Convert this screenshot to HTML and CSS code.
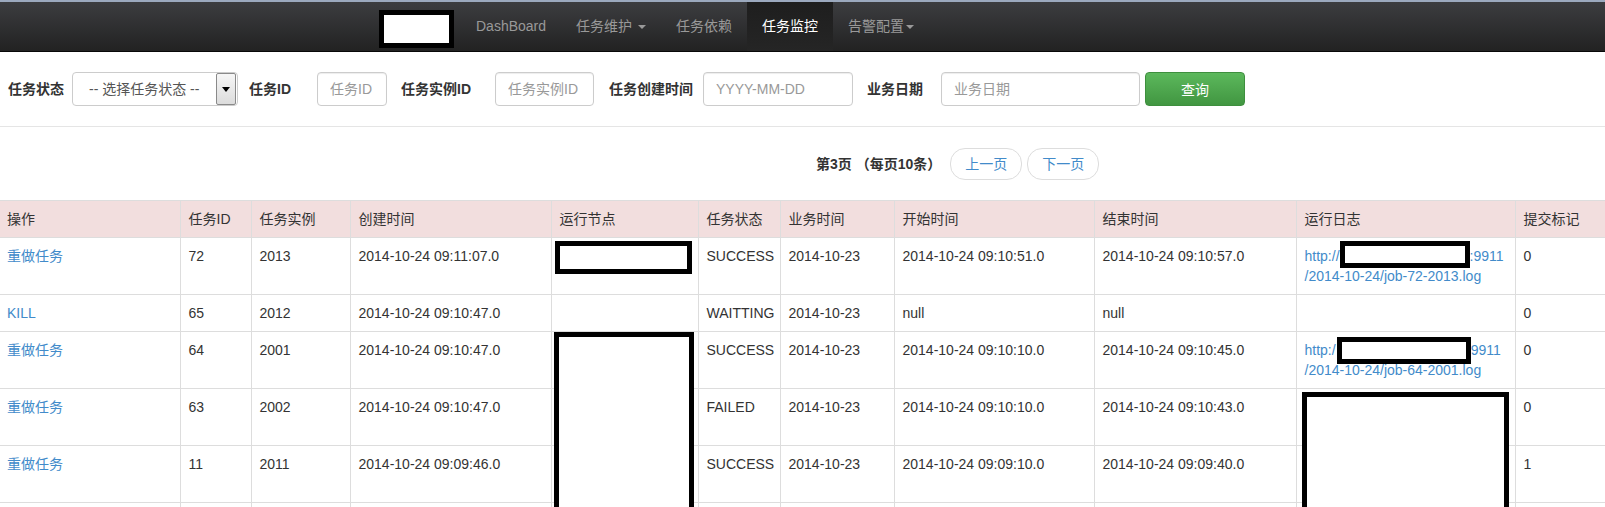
FILE: index.html
```html
<!DOCTYPE html>
<html lang="zh-CN">

<head>
    <meta charset="UTF-8">
    <meta name="viewport" content="width=device-width, initial-scale=1.0">
    <title>任务监控</title>

    <link rel="stylesheet" href="styles.css">
</head>

<body>
    <div class="topline"></div>
    <div class="navbar">
        <a class="brand" href="#"></a>
        <ul class="nav">
            <li><a href="#">DashBoard</a></li>
            <li><a href="#">任务维护 <b class="caret"></b></a></li>
            <li><a href="#">任务依赖</a></li>
            <li class="active"><a href="#">任务监控</a></li>
            <li><a href="#">告警配置<b class="caret"></b></a></li>
        </ul>
    </div>

    <form class="filters">
        <label class="lbl lbl-status">任务状态</label>
        <div class="select">
            <span>-- 选择任务状态 --</span>
            <span class="select-arrow"></span>
        </div>
        <label class="lbl lbl-id">任务ID</label>
        <input class="field field-id" type="text" placeholder="任务ID">
        <label class="lbl lbl-inst">任务实例ID</label>
        <input class="field field-inst" type="text" placeholder="任务实例ID">
        <label class="lbl lbl-create">任务创建时间</label>
        <input class="field field-create" type="text" placeholder="YYYY-MM-DD">
        <label class="lbl lbl-date">业务日期</label>
        <input class="field field-date" type="text" placeholder="业务日期">
        <button class="btn-search" type="button">查询</button>
    </form>

    <div class="pager">
        <span class="page-info">第3页 （每页10条）</span>
        <a class="pager-btn" href="#">上一页</a>
        <a class="pager-btn" href="#">下一页</a>
    </div>

    <div class="table-wrap">
        <table class="grid">
            <colgroup>
                <col style="width:180px">
                <col style="width:71px">
                <col style="width:99px">
                <col style="width:201px">
                <col style="width:147px">
                <col style="width:82px">
                <col style="width:114px">
                <col style="width:200px">
                <col style="width:202px">
                <col style="width:219px">
                <col style="width:90px">
            </colgroup>
            <thead>
                <tr>
                    <th>操作</th>
                    <th>任务ID</th>
                    <th>任务实例</th>
                    <th>创建时间</th>
                    <th>运行节点</th>
                    <th>任务状态</th>
                    <th>业务时间</th>
                    <th>开始时间</th>
                    <th>结束时间</th>
                    <th>运行日志</th>
                    <th>提交标记</th>
                </tr>
            </thead>
            <tbody>
                <tr>
                    <td><a href="#">重做任务</a></td>
                    <td>72</td>
                    <td>2013</td>
                    <td>2014-10-24 09:11:07.0</td>
                    <td><span class="mask mask-node"></span></td>
                    <td>SUCCESS</td>
                    <td>2014-10-23</td>
                    <td>2014-10-24 09:10:51.0</td>
                    <td>2014-10-24 09:10:57.0</td>
                    <td><a class="log" href="#"><span class="nowrap">http://<span class="mask mask-host"></span>:9911</span><br>/2014-10-24/job-72-2013.log</a></td>
                    <td>0</td>
                </tr>
                <tr>
                    <td><a href="#">KILL</a></td>
                    <td>65</td>
                    <td>2012</td>
                    <td>2014-10-24 09:10:47.0</td>
                    <td></td>
                    <td>WAITTING</td>
                    <td>2014-10-23</td>
                    <td>null</td>
                    <td>null</td>
                    <td></td>
                    <td>0</td>
                </tr>
                <tr>
                    <td><a href="#">重做任务</a></td>
                    <td>64</td>
                    <td>2001</td>
                    <td>2014-10-24 09:10:47.0</td>
                    <td></td>
                    <td>SUCCESS</td>
                    <td>2014-10-23</td>
                    <td>2014-10-24 09:10:10.0</td>
                    <td>2014-10-24 09:10:45.0</td>
                    <td><a class="log" href="#"><span class="nowrap">http:/<span class="mask mask-host2"></span>9911</span><br>/2014-10-24/job-64-2001.log</a></td>
                    <td>0</td>
                </tr>
                <tr>
                    <td><a href="#">重做任务</a></td>
                    <td>63</td>
                    <td>2002</td>
                    <td>2014-10-24 09:10:47.0</td>
                    <td></td>
                    <td>FAILED</td>
                    <td>2014-10-23</td>
                    <td>2014-10-24 09:10:10.0</td>
                    <td>2014-10-24 09:10:43.0</td>
                    <td><a class="log" href="#">http://<br>/2014-10-24/job-63-2002.log</a></td>
                    <td>0</td>
                </tr>
                <tr>
                    <td><a href="#">重做任务</a></td>
                    <td>11</td>
                    <td>2011</td>
                    <td>2014-10-24 09:09:46.0</td>
                    <td></td>
                    <td>SUCCESS</td>
                    <td>2014-10-23</td>
                    <td>2014-10-24 09:09:10.0</td>
                    <td>2014-10-24 09:09:40.0</td>
                    <td><a class="log" href="#">http://<br>/2014-10-24/job-11-2011.log</a></td>
                    <td>1</td>
                </tr>
                <tr class="row-more">
                    <td></td>
                    <td></td>
                    <td></td>
                    <td></td>
                    <td></td>
                    <td></td>
                    <td></td>
                    <td></td>
                    <td></td>
                    <td></td>
                    <td></td>
                </tr>
            </tbody>
        </table>
        <!-- redacted blocks spanning several rows -->
        <div class="mask mask-nodes"></div>
        <div class="mask mask-logs"></div>
    </div>
</body>

</html>
```

FILE: styles.css
```css
body, html {
    margin: 0;
    padding: 0;
    font-family: "Liberation Sans", "Noto Sans CJK SC", Arial, sans-serif;
    font-size: 14px;
    line-height: 20px;
    color: #333;
    background: #fff;
    overflow: hidden;
}

a {
    color: #428bca;
    text-decoration: none;
}

/* navbar */
.topline {
    height: 2px;
    background-color: #9ba9be;
}

.navbar {
    display: flex;
    align-items: flex-start;
    height: 49px;
    padding-left: 379px;
    background-image: linear-gradient(to bottom, #3c3d40 0%, #222 100%);
    border-bottom: 1px solid #080808;
}

.brand {
    display: block;
    box-sizing: border-box;
    width: 75px;
    height: 38px;
    margin: 8px 7px 0 0;
    background-color: #fff;
    border: 5px solid #000;
}

.nav {
    display: flex;
    margin: 0;
    padding: 0;
    list-style: none;
}

.nav a {
    display: block;
    padding: 14px 15px 15px;
    color: #999;
}

.nav .active a {
    color: #fff;
    background-image: linear-gradient(to bottom, #1e1e1e 0%, #252525 100%);
}

.caret {
    display: inline-block;
    width: 0;
    height: 0;
    margin-left: 2px;
    vertical-align: middle;
    border-top: 4px solid #999;
    border-left: 4px solid transparent;
    border-right: 4px solid transparent;
}

/* filter form */
.filters {
    display: flex;
    align-items: center;
    margin: 0;
    padding: 20px 8px;
    border-bottom: 1px solid #e5e5e5;
}

.lbl {
    font-weight: bold;
    white-space: nowrap;
}

.lbl-status { width: 64px; }
.lbl-id { width: 68px; margin-left: 11px; }
.lbl-inst { width: 94px; margin-left: 14px; }
.lbl-create { width: 94px; margin-left: 15px; }
.lbl-date { width: 74px; margin-left: 14px; }

.select {
    display: flex;
    align-items: center;
    justify-content: space-between;
    box-sizing: border-box;
    width: 166px;
    height: 34px;
    padding: 0 1px 0 16px;
    color: #555;
    border: 1px solid #ccc;
    border-radius: 4px;
}

.select-arrow {
    position: relative;
    box-sizing: border-box;
    width: 20px;
    height: 32px;
    border: 1px solid #8a8a8a;
    border-radius: 2px;
    background-image: linear-gradient(to bottom, #f6f6f6 0%, #dcdcdc 100%);
}

.select-arrow::after {
    content: "";
    position: absolute;
    left: 5px;
    top: 13px;
    border-top: 5px solid #000;
    border-left: 4px solid transparent;
    border-right: 4px solid transparent;
}

.field {
    box-sizing: border-box;
    height: 34px;
    padding: 6px 12px;
    font-family: inherit;
    font-size: 14px;
    color: #555;
    border: 1px solid #ccc;
    border-radius: 4px;
    box-shadow: inset 0 1px 1px rgba(0, 0, 0, 0.075);
}

.field::placeholder {
    color: #999;
}

.field-id { width: 70px; }
.field-inst { width: 99px; }
.field-create { width: 150px; }
.field-date { width: 199px; }

.btn-search {
    width: 100px;
    height: 34px;
    margin-left: 5px;
    font-family: inherit;
    font-size: 14px;
    color: #fff;
    border: 1px solid #3e8f3e;
    border-radius: 4px;
    background-image: linear-gradient(to bottom, #5cb85c 0%, #419641 100%);
}

/* pagination */
.pager {
    display: flex;
    align-items: center;
    margin: 21px 0 20px;
    padding-left: 816px;
}

.page-info {
    font-weight: bold;
    white-space: nowrap;
}

.pager-btn {
    display: inline-block;
    margin-left: 5px;
    padding: 5px 14px;
    border: 1px solid #ddd;
    border-radius: 15px;
    white-space: nowrap;
}

.pager-btn:first-of-type {
    margin-left: 9px;
}

/* table */
.table-wrap {
    position: relative;
}

.grid {
    width: 100%;
    table-layout: fixed;
    border-collapse: collapse;
}

.grid th,
.grid td {
    padding: 8px;
    text-align: left;
    vertical-align: top;
    font-weight: normal;
    border: 1px solid #ddd;
    white-space: nowrap;
    overflow: visible;
}

.grid th:first-child,
.grid td:first-child {
    padding-left: 7px;
    border-left: 0;
}

.grid th:last-child,
.grid td:last-child {
    border-right: 0;
}

.grid thead th {
    background-color: #f2dede;
}

.grid .row-more td {
    height: 40px;
}

.nowrap {
    white-space: nowrap;
}

.mask {
    display: inline-block;
    box-sizing: border-box;
    vertical-align: top;
    background-color: #fff;
    border: 5px solid #000;
}

.mask-node {
    width: 137px;
    height: 33px;
    margin: -5px 0 -8px -5px;
}

.mask-host {
    width: 130px;
    height: 27px;
    margin: -5px 0 -2px;
}

.mask-host2 {
    width: 134px;
    height: 27px;
    margin: -3px 0 -4px 1px;
}

.mask-nodes {
    position: absolute;
    left: 554px;
    top: 132px;
    width: 140px;
    height: 200px;
}

.mask-logs {
    position: absolute;
    left: 1302px;
    top: 192px;
    width: 207px;
    height: 200px;
}
```
